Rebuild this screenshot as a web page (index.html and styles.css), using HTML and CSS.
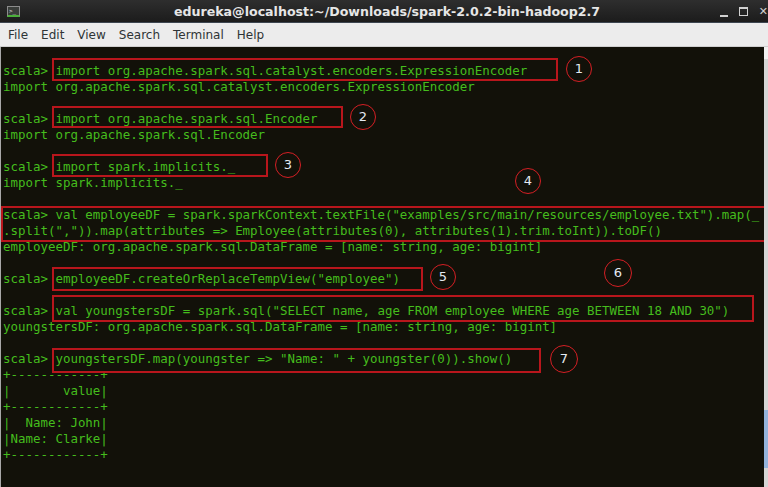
FILE: index.html
```html
<!DOCTYPE html>
<html lang="en">
<head>
  <meta charset="UTF-8">
  <meta name="viewport" content="width=device-width, initial-scale=1.0">
  <title>edureka@localhost:~/Downloads/spark-2.0.2-bin-hadoop2.7</title>
  <link rel="stylesheet" href="styles.css">
</head>
<body>
  <div class="window">
    <div class="titlebar">
      <div class="app-icon"><span>&gt;_</span></div>
      <div class="title">edureka@localhost:~/Downloads/spark-2.0.2-bin-hadoop2.7</div>
      <div class="controls">
        <span class="ctl-min"></span>
        <span class="ctl-max"></span>
        <span class="ctl-close">&#x2715;</span>
      </div>
    </div>

    <div class="menubar">
      <span>File</span>
      <span>Edit</span>
      <span>View</span>
      <span>Search</span>
      <span>Terminal</span>
      <span>Help</span>
    </div>

    <div class="body">
      <div class="term">
        <div class="ln"></div>
        <div class="ln">scala&gt; import org.apache.spark.sql.catalyst.encoders.ExpressionEncoder</div>
        <div class="ln">import org.apache.spark.sql.catalyst.encoders.ExpressionEncoder</div>
        <div class="ln"></div>
        <div class="ln">scala&gt; import org.apache.spark.sql.Encoder</div>
        <div class="ln">import org.apache.spark.sql.Encoder</div>
        <div class="ln"></div>
        <div class="ln">scala&gt; import spark.implicits._</div>
        <div class="ln">import spark.implicits._</div>
        <div class="ln"></div>
        <div class="ln">scala&gt; val employeeDF = spark.sparkContext.textFile("examples/src/main/resources/employee.txt").map(_</div>
        <div class="ln">.split(",")).map(attributes =&gt; Employee(attributes(0), attributes(1).trim.toInt)).toDF()</div>
        <div class="ln">employeeDF: org.apache.spark.sql.DataFrame = [name: string, age: bigint]</div>
        <div class="ln"></div>
        <div class="ln">scala&gt; employeeDF.createOrReplaceTempView("employee")</div>
        <div class="ln"></div>
        <div class="ln">scala&gt; val youngstersDF = spark.sql("SELECT name, age FROM employee WHERE age BETWEEN 18 AND 30")</div>
        <div class="ln">youngstersDF: org.apache.spark.sql.DataFrame = [name: string, age: bigint]</div>
        <div class="ln"></div>
        <div class="ln">scala&gt; youngstersDF.map(youngster =&gt; "Name: " + youngster(0)).show()</div>
        <div class="ln">+------------+</div>
        <div class="ln">|       value|</div>
        <div class="ln">+------------+</div>
        <div class="ln">|  Name: John|</div>
        <div class="ln">|Name: Clarke|</div>
        <div class="ln">+------------+</div>

        <!-- annotations drawn over the terminal -->
        <div class="box b1"></div>
        <div class="box b2"></div>
        <div class="box b3"></div>
        <div class="box b4"></div>
        <div class="box b5"></div>
        <div class="box b6"></div>
        <div class="box b7"></div>

        <div class="num n1">1</div>
        <div class="num n2">2</div>
        <div class="num n3">3</div>
        <div class="num n4">4</div>
        <div class="num n5">5</div>
        <div class="num n6">6</div>
        <div class="num n7">7</div>
      </div>
      <div class="scrollbar"><div class="thumb"></div></div>
    </div>
  </div>
</body>
</html>
```

FILE: styles.css
```css
* {
  box-sizing: border-box;
}

body {
  margin: 0;
  width: 768px;
  height: 487px;
  overflow: hidden;
  background-color: #121109;
}

.window {
  display: flex;
  flex-direction: column;
  height: 487px;
}

/* Title bar */
.titlebar {
  height: 23px;
  display: flex;
  align-items: center;
  background: linear-gradient(#2e2e2e, #1c1c1c);
  border-bottom: 1px solid #3d4650;
}

.app-icon {
  width: 13px;
  height: 11px;
  margin-left: 7px;
  background-color: #3a3d3a;
  border: 1px solid #8c8c8c;
  border-bottom: 2px solid #4caf3a;
  font-family: "DejaVu Sans Mono", monospace;
  font-size: 6px;
  line-height: 8px;
  color: #e0e0e0;
  padding-left: 1px;
}

.title {
  flex: 1;
  text-align: center;
  font-family: "DejaVu Sans", sans-serif;
  font-weight: bold;
  font-size: 12.6px;
  color: #e6e6e6;
  padding-left: 34px;
}

.controls {
  display: flex;
  align-items: center;
  gap: 11px;
  width: 48px;
  height: 100%;
  overflow: hidden;
}

.ctl-min {
  width: 8px;
  height: 2px;
  background-color: #d0d0d0;
  margin-top: 9px;
}

.ctl-max {
  width: 9px;
  height: 9px;
  border: 1px solid #d0d0d0;
  border-top-width: 2px;
  margin-top: 1px;
}

.ctl-close {
  font-family: "DejaVu Sans", sans-serif;
  font-size: 11px;
  font-weight: bold;
  color: #d0d0d0;
}

/* Menu bar */
.menubar {
  height: 24px;
  display: flex;
  align-items: center;
  gap: 13px;
  padding-left: 8px;
  background-color: #ececec;
  border-bottom: 1px solid #cfcfcf;
  font-family: "DejaVu Sans", sans-serif;
  font-size: 12px;
  color: #2e3436;
}

/* Terminal */
.body {
  flex: 1;
  display: flex;
  min-height: 0;
}

.term {
  flex: 1;
  position: relative;
  overflow: hidden;
  padding-left: 2px;
  border-left: 1px solid #a8a8a8;
  background-color: #121109;
  font-family: "DejaVu Sans Mono", monospace;
  font-size: 12.45px;
  line-height: 16px;
  color: #45bd1d;
}

.ln {
  height: 16px;
  width: fit-content;
  white-space: pre;
}

.scrollbar {
  width: 4px;
  background-color: #d6d6d6;
  border-top: 12px solid #f2f2f2;
  position: relative;
}

.thumb {
  position: absolute;
  left: 0;
  right: 0;
  top: 351px;
  height: 58px;
  background-color: #94b4dc;
}

/* Annotations */
.box {
  position: absolute;
  border: 2px solid #b8161c;
}

.b1 { left: 51px; top: 11px; width: 506px; height: 23px; }
.b2 { left: 51px; top: 59px; width: 291px; height: 22px; }
.b3 { left: 51px; top: 107px; width: 216px; height: 23px; }
.b4 { left: 0; top: 159px; width: 766px; height: 36px; }
.b5 { left: 51px; top: 220px; width: 371px; height: 24px; }
.b6 { left: 51px; top: 248px; width: 702px; height: 27px; }
.b7 { left: 51px; top: 301px; width: 489px; height: 25px; }

.num {
  position: absolute;
  width: 26px;
  height: 26px;
  border: 1px solid #d41f24;
  border-radius: 50%;
  display: flex;
  align-items: center;
  justify-content: center;
  font-family: "DejaVu Sans", sans-serif;
  font-size: 13px;
  color: #e4eaf2;
}

.n1 { left: 565px; top: 9px; }
.n2 { left: 349px; top: 57px; }
.n3 { left: 274px; top: 105px; }
.n4 { left: 514px; top: 121px; }
.n5 { left: 429px; top: 217px; }
.n6 { left: 603px; top: 212px; width: 28px; height: 28px; }
.n7 { left: 549px; top: 298px; width: 28px; height: 28px; }
```
